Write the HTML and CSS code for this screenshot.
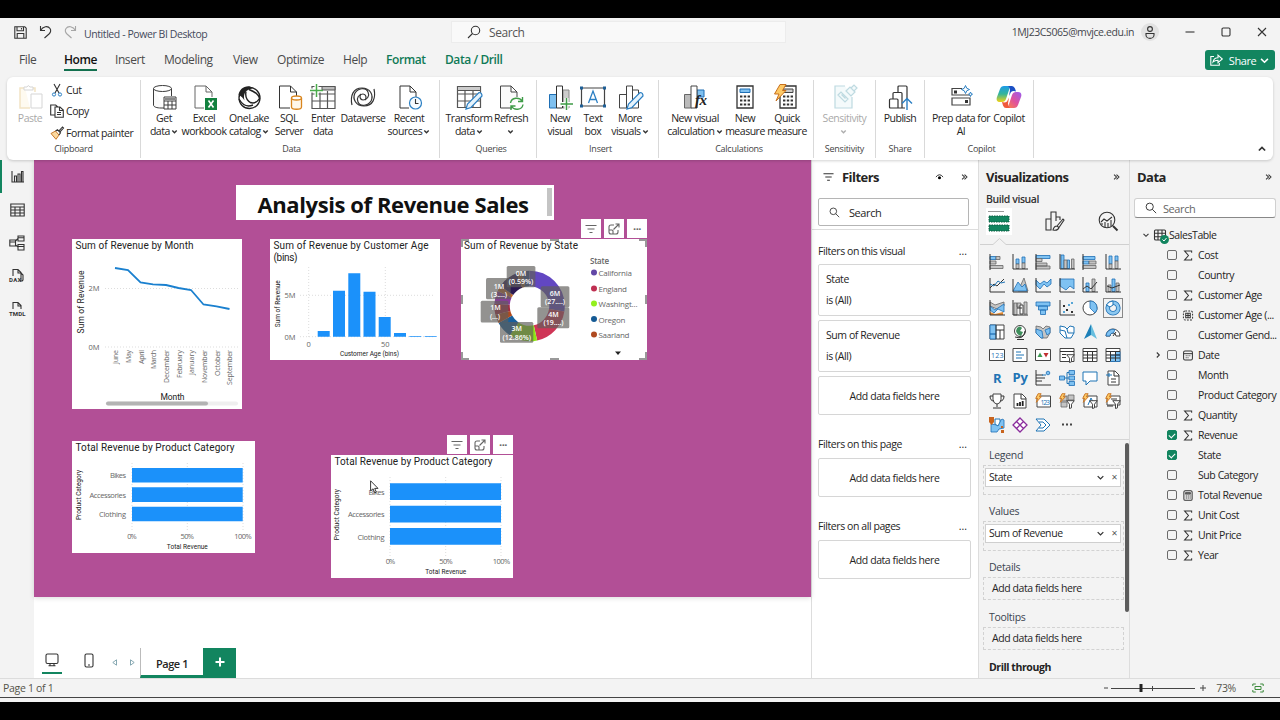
FILE: index.html
```html
<!DOCTYPE html>
<html lang="en">

<head>
    <meta charset="UTF-8">
    <meta name="viewport" content="width=device-width, initial-scale=1.0">
    <title>Untitled - Power BI Desktop</title>
    <link rel="stylesheet" href="styles.css">
</head>

<body>
    <svg class="defs">
        <symbol id="chev" viewBox="0 0 8 8"><path class="ln" d="M1.5 2.8 4 5.3 6.5 2.8" /></symbol>
        <symbol id="dbl" viewBox="0 0 10 10"><path class="ln" d="M1.5 1.5 5 5 1.5 8.5M5 1.5 8.5 5 5 8.5" /></symbol>
        <symbol id="lens" viewBox="0 0 14 14"><circle class="ln" cx="8.5" cy="5.5" r="4.2" /><path class="ln" d="M5.5 8.5 1 13" /></symbol>
        <symbol id="lensl" viewBox="0 0 14 14"><circle class="ln" cx="5.5" cy="5.5" r="4.2" /><path class="ln" d="M8.5 8.5 13 13" /></symbol>
        <symbol id="sum" viewBox="0 0 10 12"><path class="ln" d="M9 3V1H1.2L5.5 6 1.2 11H9V9" /></symbol>
        <symbol id="filt" viewBox="0 0 12 10"><path class="ln" d="M0.5 1.5h11M2.5 5h7M4.5 8.5h3" /></symbol>
        <symbol id="focus" viewBox="0 0 12 12"><path class="ln" d="M6 2H3Q1 2 1 4v5q0 2 2 2h5q2 0 2-2V7M1 7h3q1 0 1 1v3M5.5 6.5 11 1M7.500 1H11v3.500" /></symbol>
        <symbol id="bolt" viewBox="0 0 8 11"><path fill="#fdc966" stroke="#c9701c" d="M3.500 .6H7L5 4h2.300L1.500 10.400 3 6H.8z" /></symbol>
        <symbol id="funnel" viewBox="0 0 9 9"><path fill="#fff" stroke="#444" d="M.7.700h7.600L5.500 4.200v3.600l-2 .7V4.200z" /></symbol>
    </svg>

    <div class="app">
        <header class="titlebar">
            <div class="quick">
                <svg width="13" height="13" viewBox="0 0 13 13"><path class="ln" d="M.8.8h10l1.400 1.400v10H.8zM3 .8v4h6.500v-4M3.200 12V7.500h6.600V12M7.500 2v1.500" /></svg>
                <svg width="13" height="14" viewBox="0 0 13 14"><path class="ln" d="M1.500 1v4.500H6M1.500 5.500C4 1 9 .5 11 3.500c1.300 2 .5 4-1 5.500L5.500 13" /></svg>
                <svg class="off" width="13" height="14" viewBox="0 0 13 14"><path class="ln" d="M11.500 1v4.500H7M11.500 5.500C9 1 4 .5 2 3.500c-1.300 2-.5 4 1 5.500L7.500 13" /></svg>
                <span>Untitled - Power BI Desktop</span>
            </div>
            <div class="topsearch">
                <svg width="14" height="14"><use href="#lens" /></svg>
                <span>Search</span>
            </div>
            <div class="account">
                <span>1MJ23CS065@mvjce.edu.in</span>
                <div class="avatar"><svg width="10" height="13" viewBox="0 0 10 13"><circle class="ln" cx="5" cy="3" r="2.400" /><path class="ln" d="M1 7.500h8v1.500a4 3.400 0 0 1-8 0z" /></svg></div>
                <svg width="10" height="10" viewBox="0 0 10 10"><path class="ln" d="M.5 5h9" /></svg>
                <svg width="10" height="10" viewBox="0 0 10 10"><rect class="ln" x="1" y="1" width="8" height="8" rx="1.200" /></svg>
                <svg width="10" height="10" viewBox="0 0 10 10"><path class="ln" d="M1 1l8 8M9 1 1 9" /></svg>
            </div>
        </header>

        <nav class="menubar">
            <div class="menu">
                <span>File</span><span class="on">Home</span><span>Insert</span><span>Modeling</span><span>View</span><span>Optimize</span><span>Help</span><span class="ctx">Format</span><span class="ctx">Data / Drill</span>
            </div>
            <button class="share">
                <svg width="13" height="12" viewBox="0 0 13 12"><path class="ln" d="M4 2.500H.8v8.700h8.500V9M3 8c.5-3 2.500-4.200 5-4.300V1.200L12.300 5 8 8.600V6.200C5.800 6.200 4.300 6.600 3 8z" /></svg>
                Share
                <svg width="11" height="11"><use href="#chev" /></svg>
            </button>
        </nav>

        <section class="ribbon">
            <div class="group clip">
                <div class="cmds">
                    <div class="cmd off">
                        <svg width="26" height="26" viewBox="0 0 26 26"><path fill="#fdf3da" stroke="#e0bd70" stroke-width="1.500" d="M8 4H3v20h10M18 8V4h-5" /><path fill="#fff" stroke="#999" d="M7 6V3h3q1-3 3 0h3v3zM14 10h11v14H14z" /></svg>
                        <span>Paste</span>
                    </div>
                    <div class="mini">
                        <div><svg width="14" height="14" viewBox="0 0 14 14"><path class="ln" d="M4 1l5 9M10 1 5 10" /><g fill="none" stroke="#2b7fc3"><circle cx="4" cy="11.500" r="1.600" /><circle cx="10" cy="11.500" r="1.600" /></g></svg>Cut</div>
                        <div><svg width="14" height="14" viewBox="0 0 14 14"><path class="ln" d="M5 11H.7V1h5l2 2M5 3h5l3.300 3v7.300H5zM9.500 3v3.500h3.500M7 8.500h4M7 10.500h4" /></svg>Copy</div>
                        <div><svg width="14" height="14" viewBox="0 0 14 14"><path fill="#fbd9a0" stroke="#c97a2b" d="M1 7.500 5.500 5 9 9l-3 4.300z" /><path class="ln" d="M5.500 5 7.500 3.800l3 3L9 9M9 4.800 12.500 1l1 1L10 5.800" /></svg>Format painter</div>
                    </div>
                </div>
                <div class="name">Clipboard</div>
            </div>
            <div class="group data">
                <div class="cmds">
                    <div class="cmd w40">
                        <svg width="26" height="26" viewBox="0 0 26 26"><path fill="#fafafa" stroke="#3b3b3b" d="M13 24H10c-4 0-7.500-1-7.500-3V4.500M20.500 12V4.500" /><ellipse cx="11.500" cy="4.500" rx="9" ry="3" fill="#fff" stroke="#3b3b3b" /><path fill="#fff" stroke="#3b3b3b" d="M13 13h12v12H13zM13 17h12M13 21h12M17 17v8M21 17v8" /><path stroke="#888" stroke-width="2" d="M13.500 15h11" /></svg>
                        <span>Get<br>data <svg width="7" height="7"><use href="#chev" /></svg></span>
                    </div>
                    <div class="cmd w40">
                        <svg width="26" height="26" viewBox="0 0 26 26"><path fill="#fff" stroke="#666" d="M13 24H4V2h11l6 6v5M15 2v6h6" /><path fill="#12813f" d="M14 14h12v12H14z" /><path fill="none" stroke="#fff" stroke-width="1.600" d="M17.500 16.500l5 7M22.500 16.500l-5 7" /></svg>
                        <span>Excel<br>workbook</span>
                    </div>
                    <div class="cmd w50">
                        <svg width="26" height="26" viewBox="0 0 26 26"><circle cx="13.500" cy="14" r="10.500" fill="#fff" stroke="#222" stroke-width="1.300" /><path fill="#222" d="M14 2.500C8 1.500 3 6 2.500 11c3 1 4.500 3 6 5.500C7 11 9 7 13 5.500c2-.8 4-1.500 4-1.500z" /><path fill="none" stroke="#222" stroke-width="1.400" d="M13 5.500c5 2 9.500 4 10.500 9-2.500 4-6 5-9 4M10 7.500c-1 5 1 9 5 11.500M3 15c4 7 9 8 14 6" /></svg>
                        <span>OneLake<br>catalog <svg width="7" height="7"><use href="#chev" /></svg></span>
                    </div>
                    <div class="cmd w30">
                        <svg width="26" height="26" viewBox="0 0 26 26"><path fill="#fff" stroke="#333" d="M14 24H3.500V2h11l6 6v5M14.500 2v6h6" /><path fill="#fff7ea" stroke="#d9861f" stroke-width="1.300" d="M15.500 14v9c0 3 10 3 10 0v-9" /><ellipse cx="20.500" cy="14" rx="5" ry="2" fill="#fff" stroke="#d9861f" stroke-width="1.300" /></svg>
                        <span>SQL<br>Server</span>
                    </div>
                    <div class="cmd w38">
                        <svg width="26" height="26" viewBox="0 0 26 26"><path fill="#fff" stroke="#555" stroke-width="1.200" d="M2 2.500h23v22H2zM2 10h23M2 17h23M10 7v17.500M17.500 7v17.500" /><path fill="#bbb" stroke="#555" d="M12 2.500h13v3.500H12z" /><path stroke="#fff" stroke-width="4" d="M0 6.500h11M6.500 0v13" /><path stroke="#4bac4c" stroke-width="1.500" d="M0 6.500h13M6.500 0v13" /></svg>
                        <span>Enter<br>data</span>
                    </div>
                    <div class="cmd w42">
                        <svg width="26" height="26" viewBox="0 0 26 26"><g fill="none" stroke="#333" stroke-width="1.200"><path d="M2 21C0 12 3 4 12 4c8 0 12 7 9 13-3 5-11 6-13 1-2-4 1-8 5-8 3 0 4 4 2 6" /><path d="M24 5c2 9-1 17-10 17C6 22 2 15 5 9c3-5 11-6 13-1 2 4-1 8-5 8-3 0-4-4-2-6" /></g></svg>
                        <span>Dataverse</span>
                    </div>
                    <div class="cmd w50">
                        <svg width="26" height="26" viewBox="0 0 26 26"><path fill="#fff" stroke="#333" d="M13 24H4V2h10l6 6v5M14 2v6h6" /><circle cx="19.500" cy="19" r="6" fill="#f4faff" stroke="#2b7fc3" stroke-width="1.200" /><path class="ln" d="M19.500 15v4.500h3" /></svg>
                        <span>Recent<br>sources <svg width="7" height="7"><use href="#chev" /></svg></span>
                    </div>
                </div>
                <div class="name">Data</div>
            </div>
            <div class="group queries">
                <div class="cmds">
                    <div class="cmd w46">
                        <svg width="26" height="26" viewBox="0 0 26 26"><path fill="#fff" stroke="#555" stroke-width="1.200" d="M1.500 2.500h23v21h-23zM1.500 10h23M1.500 17h23M9 7v16M17 7v16" /><path fill="#ccc" stroke="#555" d="M1.500 2.500h23v4h-23z" /><path fill="#e6f3fc" stroke="#2b7fc3" stroke-width="1.200" d="M10 25l1.500-5L23 8.500q3 0 3 3.500L15 23.500z" /></svg>
                        <span>Transform<br>data <svg width="7" height="7"><use href="#chev" /></svg></span>
                    </div>
                    <div class="cmd w38">
                        <svg width="26" height="26" viewBox="0 0 26 26"><path fill="#fafafa" stroke="#444" d="M14 24H2.500V2H13l6 6v5M13 2v6h6" /><path fill="none" stroke="#3f9c48" stroke-width="1.400" d="M12.500 19c1-6 9-6 11.500-2M24.500 13v4.500H20M25 20.500c-1 6-9 6-11.500 2M13 26v-4h4.500" /></svg>
                        <span>Refresh<br><svg width="7" height="7"><use href="#chev" /></svg></span>
                    </div>
                </div>
                <div class="name">Queries</div>
            </div>
            <div class="group insert">
                <div class="cmds">
                    <div class="cmd w34">
                        <svg width="26" height="26" viewBox="0 0 26 26"><path fill="#7fc0ef" stroke="#1e6fb5" d="M2.500 10.500h7V24h-7z" /><path fill="#ccc" stroke="#888" d="M16 6h6v18h-6z" /><path fill="#fff" stroke="#333" d="M9.500 2h6v22h-6z" /><path stroke="#fff" stroke-width="4" d="M13 20h13M19.500 14v12" /><path stroke="#3f9c48" stroke-width="1.500" d="M13.500 20H26M19.500 14v12" /></svg>
                        <span>New<br>visual</span>
                    </div>
                    <div class="cmd w32">
                        <svg width="26" height="26" viewBox="0 0 26 26"><path fill="#fff" stroke="#444" stroke-width="1.200" d="M1.500 4h23v18h-23z" /><path fill="none" stroke="#2b7fc3" stroke-width="1.300" d="M8.500 19 13 7l4.500 12M10 15.500h6" /><path fill="#1e5f96" d="M0 2.500h3v3H0zM23 2.500h3v3h-3zM0 20.500h3v3H0zM23 20.500h3v3h-3z" /></svg>
                        <span>Text<br>box</span>
                    </div>
                    <div class="cmd w42">
                        <svg width="26" height="26" viewBox="0 0 26 26"><path fill="#fff" stroke="#444" d="M2.500 10.500h7V24h-7zM15.500 6h6v18h-6zM9.500 2h6v22h-6z" /><path fill="#e6f3fc" stroke="#2b7fc3" stroke-width="1.200" d="M10 25l1.500-5L23 8.500q3 0 3 3.500L15 23.500z" /></svg>
                        <span>More<br>visuals <svg width="7" height="7"><use href="#chev" /></svg></span>
                    </div>
                </div>
                <div class="name">Insert</div>
            </div>
            <div class="group calc">
                <div class="cmds">
                    <div class="cmd w60">
                        <svg width="26" height="26" viewBox="0 0 26 26"><path fill="#bbb" stroke="#666" d="M2.500 10.500h7V24h-7z" /><path fill="#7fc0ef" stroke="#1e6fb5" d="M15 6h7v7h-7z" /><path fill="#fff" stroke="#444" d="M9 2h6v22H9z" /><text class="fx" x="13" y="21">fx</text></svg>
                        <span>New visual<br>calculation <svg width="7" height="7"><use href="#chev" /></svg></span>
                    </div>
                    <div class="cmd w40">
                        <svg width="26" height="26" viewBox="0 0 26 26"><path fill="#fff" stroke="#333" stroke-width="1.300" d="M5 2h16v22H5z" /><path fill="#7fc0ef" stroke="#1e6fb5" d="M8 5h10v3.500H8z" /><path class="keys" d="M8 12.500h10M8 16.500h10M8 20.500h10" /></svg>
                        <span>New<br>measure</span>
                    </div>
                    <div class="cmd w44">
                        <svg width="26" height="26" viewBox="0 0 26 26"><path fill="#fff" stroke="#333" stroke-width="1.300" d="M6 2h16v22H6z" /><path fill="#ccc" stroke="#444" d="M9 5h10v3.500H9z" /><path class="keys" d="M9 12.500h10M9 16.500h10M9 20.500h10" /><path fill="#fdc966" stroke="#c9701c" d="M6 .5h6L8.500 6.500H12L2 17l3-7H.5z" /></svg>
                        <span>Quick<br>measure</span>
                    </div>
                </div>
                <div class="name">Calculations</div>
            </div>
            <div class="group sens">
                <div class="cmds">
                    <div class="cmd off">
                        <svg width="26" height="26" viewBox="0 0 26 26"><g fill="#e4f3f6" stroke="#5fa5b5" stroke-width="1.200"><path d="M14 2H4v22h17V13" /><path d="M7 11l3-3 7 7-3 3zM15 7l4-4 5 5-4 4zM20 4l3-3 3 3-3 3zM10.500 10.500l4 4" /></g></svg>
                        <span>Sensitivity<br><svg width="7" height="7"><use href="#chev" /></svg></span>
                    </div>
                </div>
                <div class="name">Sensitivity</div>
            </div>
            <div class="group pub">
                <div class="cmds">
                    <div class="cmd">
                        <svg width="26" height="26" viewBox="0 0 26 26"><path fill="#fff" stroke="#333" stroke-width="1.200" d="M11 8V3q0-1 1-1h7q1 0 1 1v21H3.500q-1 0-1-1v-7q0-1 1-1H10q1 0 1 1v8M6 15V9.500q0-1 1-1h7q1 0 1 1V24" /><path fill="none" stroke="#fff" stroke-width="4" d="M20 26V15" /><path fill="none" stroke="#2b7fc3" stroke-width="1.400" d="M20 26V14.500M15 19.500l5-5 5 5" /></svg>
                        <span>Publish</span>
                    </div>
                </div>
                <div class="name">Share</div>
            </div>
            <div class="group copilot">
                <div class="cmds">
                    <div class="cmd w62">
                        <svg width="26" height="26" viewBox="0 0 26 26"><path fill="#fff" stroke="#444" stroke-width="1.200" d="M22 11H4V4.500h10M4 14h18v7H4z" /><path fill="#333" d="M6 6.500h3v3H6zM17 16h3v3h-3z" /><path fill="#fff" stroke="#2b7fc3" d="M17.500 1.500q.5 3.500 4 4-3.500.5-4 4-.5-3.500-4-4 3.500-.5 4-4zM22.500 8q.2 2 2 2.200-1.800.3-2 2.300-.2-2-2-2.300 1.800-.2 2-2.200z" /></svg>
                        <span>Prep data for<br>AI</span>
                    </div>
                    <div class="cmd w34">
                        <svg width="26" height="26" viewBox="0 0 26 26">
                            <defs>
                                <linearGradient id="ca" x1="0" y1="0" x2="0" y2="1"><stop offset="0" stop-color="#1c9be8" /><stop offset=".5" stop-color="#35b59a" /><stop offset="1" stop-color="#f3d314" /></linearGradient>
                                <linearGradient id="cb" x1="1" y1="0" x2="0" y2="1"><stop offset="0" stop-color="#9a5cf0" /><stop offset=".5" stop-color="#e0529c" /><stop offset="1" stop-color="#ff8a3c" /></linearGradient>
                            </defs>
                            <path fill="url(#ca)" d="M8 2h9q-3 0-4 4l-3 9q-1 3-4 3H4c-3 0-4-2-3-5L4 5q1-3 4-3z" />
                            <path fill="#1b50c4" d="M12 2h4q2 0 3 2.500l1 3q-3-1-5 .5l-2 4 1-6q0-3-2-4z" />
                            <path fill="url(#cb)" d="M18 24H9q3 0 4-4l3-9q1-3 4-3h2c3 0 4 2 3 5l-3 8q-1 3-4 3z" />
                            <path fill="#f05a3c" d="M14 24h-4q-2 0-3-2.500l-1-3.500q3 1 5-.5l2-4-1 6q0 3 2 4.500z" />
                        </svg>
                        <span>Copilot</span>
                    </div>
                </div>
                <div class="name">Copilot</div>
            </div>
            <svg class="fold" width="10" height="10"><use href="#chev" /></svg>
        </section>

        <main class="work">
            <aside class="rail">
                <div class="on"><svg width="13" height="13" viewBox="0 0 13 13"><path class="ln" d="M1 1v11h12M3.500 12V6h2v6M7 12V4h2v8M10.500 12V1.500h1.500V12" /></svg></div>
                <div><svg width="15" height="14" viewBox="0 0 15 14"><path class="ln" d="M.8 1h13.400v12H.8zM.8 4h13.400M.8 7h13.400M.8 10h13.400M5 4v9M10 4v9" /></svg></div>
                <div><svg width="16" height="16" viewBox="0 0 16 16"><path class="ln" d="M.8 5h5.700v6H.8zM9 1h6v5H9zM9 9.500h6v5.500H9zM.8 7h5.700M9 2.800h6M9 11.500h6M6.500 6 9 3.500M6.500 10l2.500 2" /></svg></div>
                <div><svg width="16" height="16" viewBox="0 0 16 16"><path class="ln" d="M4 8V1.500h5l3 3V12l-1 1.500M9 1.500V5h3M12 5l2 2v5l-1.500 1.500" /><text x="0" y="14" textLength="12">DAX</text></svg></div>
                <div><svg width="16" height="16" viewBox="0 0 16 16"><path class="ln" d="M4 8V1.500h5l3 3V8M9 1.500V5h3" /><text x="0" y="14.500" textLength="16">TMDL</text></svg></div>
            </aside>

            <div class="center">
                <div class="canvas">
                    <div class="headline"><span>Analysis of Revenue Sales</span></div>

                    <div class="visual month">
                        <svg width="170" height="170">
                            <text class="t" x="3.500" y="6.500" textLength="118">Sum of Revenue by Month</text>
                            <path class="grid" d="M33 49.500h135M33 108h135" />
                            <text class="ax e" x="27.500" y="49">2M</text>
                            <text class="ax e" x="27.500" y="107.500">0M</text>
                            <path class="line" d="M43 29 56 31 68.500 43.300 81 45.300 94 46 106.500 49 119 51 131.500 65.500 144.500 67.300 157.500 70" />
                            <text class="lab m" transform="translate(9 63) rotate(-90)" textLength="63">Sum of Revenue</text>
                            <g class="cats">
                                <text transform="translate(43.500 111) rotate(-90)" textLength="14">June</text>
                                <text transform="translate(56.300 111) rotate(-90)" textLength="13">May</text>
                                <text transform="translate(69 111) rotate(-90)" textLength="14">April</text>
                                <text transform="translate(81.700 111) rotate(-90)" textLength="19">March</text>
                                <text transform="translate(94.300 111) rotate(-90)" textLength="33">December</text>
                                <text transform="translate(107 111) rotate(-90)" textLength="28">February</text>
                                <text transform="translate(119.700 111) rotate(-90)" textLength="25">January</text>
                                <text transform="translate(132.300 111) rotate(-90)" textLength="33">November</text>
                                <text transform="translate(145 111) rotate(-90)" textLength="26">October</text>
                                <text transform="translate(157.500 111) rotate(-90)" textLength="35">September</text>
                            </g>
                            <text class="lab m" x="100.500" y="157.500" textLength="24">Month</text>
                            <rect x="34" y="162.500" width="132" height="4" rx="2" fill="#efefef" />
                            <rect x="34" y="162.500" width="102" height="4" rx="2" fill="#b3b3b3" />
                        </svg>
                    </div>

                    <div class="visual age">
                        <svg width="170" height="121">
                            <text class="t" x="3.500" y="6.500" textLength="155">Sum of Revenue by Customer Age</text>
                            <text class="t" x="3.500" y="18.500" textLength="24">(bins)</text>
                            <path class="grid" d="M30 56.300h135M30 97.700h135M38.700 28v70M115.300 28v70" />
                            <text class="ax e" x="25.500" y="56.300">5M</text>
                            <text class="ax e" x="25.500" y="97.500">0M</text>
                            <path class="bar" d="M47.700 92h12v5.700h-12zM63 51.700h12v46H63zM78.300 34.300h12v63.400h-12zM93.500 52.700h12v45h-12zM108.700 78h12v19.700h-12zM124 94h12v3.700h-12zM139.300 96.900h12v.8h-12zM154.700 96.900h12v.8h-12z" />
                            <text class="ax m" x="38.700" y="104.500">0</text>
                            <text class="ax m" x="115.300" y="104.500">50</text>
                            <text class="sl m" transform="translate(7.700 64.700) rotate(-90)" textLength="47">Sum of Revenue</text>
                            <text class="sl m" x="99.500" y="114.700" textLength="59">Customer Age (bins)</text>
                        </svg>
                    </div>

                    <div class="visual state">
                        <div class="tools">
                            <span><svg width="12" height="10"><use href="#filt" /></svg></span><span><svg width="12" height="12"><use href="#focus" /></svg></span><span>···</span>
                        </div>
                        <svg width="186" height="121">
                            <text class="t" x="3" y="6.500" textLength="114">Sum of Revenue by State</text>
                            <g class="ring">
                                <circle pathLength="100" cx="68.500" cy="67" r="27.500" stroke="#6247c2" stroke-dasharray="27.500 100" />
                                <circle pathLength="100" cx="68.500" cy="67" r="27.500" stroke="#cf3556" stroke-dasharray="19 100" stroke-dashoffset="-27.500" />
                                <circle pathLength="100" cx="68.500" cy="67" r="27.500" stroke="#8ee615" stroke-dasharray="12.900 100" stroke-dashoffset="-46.500" />
                                <circle pathLength="100" cx="68.500" cy="67" r="27.500" stroke="#17609c" stroke-dasharray="7.600 100" stroke-dashoffset="-59.400" />
                                <circle pathLength="100" cx="68.500" cy="67" r="27.500" stroke="#b24a1c" stroke-dasharray="4 100" stroke-dashoffset="-67" />
                                <circle pathLength="100" cx="68.500" cy="67" r="27.500" stroke="#a8263e" stroke-dasharray="5 100" stroke-dashoffset="-71" />
                                <circle pathLength="100" cx="68.500" cy="67" r="27.500" stroke="#8a3a9c" stroke-dasharray="6 100" stroke-dashoffset="-76" />
                                <circle pathLength="100" cx="68.500" cy="67" r="27.500" stroke="#c0682c" stroke-dasharray="2.500 100" stroke-dashoffset="-82" />
                                <circle pathLength="100" cx="68.500" cy="67" r="27.500" stroke="#2c1a52" stroke-dasharray="9.500 100" stroke-dashoffset="-84.500" />
                                <circle pathLength="100" cx="68.500" cy="67" r="27.500" stroke="#8b5a34" stroke-dasharray="2.500 100" stroke-dashoffset="-94" />
                                <circle pathLength="100" cx="68.500" cy="67" r="27.500" stroke="#2f4c86" stroke-dasharray="3.500 100" stroke-dashoffset="-96.500" />
                            </g>
                            <g class="tag">
                                <rect x="45.700" y="27" width="28.700" height="21.300" /><rect x="79.700" y="47.300" width="28.700" height="21" /><rect x="76.300" y="68.300" width="32" height="21" /><rect x="39" y="83" width="33.300" height="20.700" /><rect x="19.700" y="61.700" width="27.700" height="21.700" /><rect x="25" y="39" width="24.700" height="21.300" />
                                <text x="60" y="34">0M</text><text x="60" y="42.500">(0.59%)</text>
                                <text x="94" y="54">6M</text><text x="94" y="62.500">(27....)</text>
                                <text x="92.500" y="75">4M</text><text x="92.500" y="83.500">(19....)</text>
                                <text x="55.700" y="89.500">3M</text><text x="55.700" y="98">(12.86%)</text>
                                <text x="34.500" y="68.500">1M</text><text x="34" y="77">(...)</text>
                                <text x="38" y="47">1M</text><text x="38" y="55.500">(3....)</text>
                            </g>
                            <text class="leg b" x="129" y="21" textLength="19">State</text>
                            <circle cx="133" cy="33.500" r="3" fill="#6247a6" /><text class="leg" x="137.500" y="33.500" textLength="33.500">California</text>
                            <circle cx="133" cy="49.500" r="3" fill="#bf2f52" /><text class="leg" x="137.500" y="49.500" textLength="28.500">England</text>
                            <circle cx="133" cy="64.500" r="3" fill="#94f01e" /><text class="leg" x="137.500" y="64.500" textLength="39">Washingt...</text>
                            <circle cx="133" cy="80" r="3" fill="#155a94" /><text class="leg" x="137.500" y="80" textLength="27">Oregon</text>
                            <circle cx="133" cy="95.500" r="3" fill="#b04a20" /><text class="leg" x="137.500" y="95.500" textLength="31">Saarland</text>
                            <path d="M154 112.500h6l-3 3.500z" fill="#222" />
                            <path class="grip" d="M1 8V1h7M178 1h7v7M185 113v7h-7M8 120H1v-7M89 1h9M89 120h9M1 56v9M185 56v9" />
                        </svg>
                    </div>

                    <div class="visual cat1">
                        <svg width="183" height="112">
                            <text class="t" x="3.500" y="6.500" textLength="159">Total Revenue by Product Category</text>
                            <path class="grid" d="M60 22v68M115.300 22v68M171 22v68" />
                            <path class="bar" d="M60 27h110.700v14.500H60zM60 46.300h110.700V61H60zM60 65.700h110.700v14.500H60z" />
                            <text class="ax e" x="54" y="34.300" textLength="16">Bikes</text>
                            <text class="ax e" x="54" y="53.700" textLength="36.500">Accessories</text>
                            <text class="ax e" x="54" y="73" textLength="27">Clothing</text>
                            <text class="ax m" x="60" y="95" textLength="9.500">0%</text>
                            <text class="ax m" x="115.300" y="95" textLength="13.500">50%</text>
                            <text class="ax m" x="171" y="95" textLength="17.500">100%</text>
                            <text class="sl m" x="115.300" y="105.500" textLength="41">Total Revenue</text>
                            <text class="sl m" transform="translate(6.700 54) rotate(-90)" textLength="50">Product Category</text>
                        </svg>
                    </div>

                    <div class="visual cat2">
                        <div class="tools">
                            <span><svg width="12" height="10"><use href="#filt" /></svg></span><span><svg width="12" height="12"><use href="#focus" /></svg></span><span>···</span>
                        </div>
                        <svg width="182" height="123">
                            <text class="t" x="3.500" y="6.500" textLength="158">Total Revenue by Product Category</text>
                            <path class="grid" d="M59 22v79M114.700 22v79M170 22v79" />
                            <path class="bar" d="M59 28.300h111V45H59zM59 50.700h111v16.700H59zM59 73h111v16.700H59z" />
                            <text class="ax e" x="53.500" y="37" textLength="16">Bikes</text>
                            <text class="ax e" x="53.500" y="59.300" textLength="36.500">Accessories</text>
                            <text class="ax e" x="53.500" y="81.700" textLength="27">Clothing</text>
                            <text class="ax m" x="59.500" y="106.300" textLength="9.500">0%</text>
                            <text class="ax m" x="115" y="106.300" textLength="13.500">50%</text>
                            <text class="ax m" x="170.500" y="106.300" textLength="17.500">100%</text>
                            <text class="sl m" x="114.700" y="117" textLength="41">Total Revenue</text>
                            <text class="sl m" transform="translate(6.300 59.700) rotate(-90)" textLength="51">Product Category</text>
                        </svg>
                    </div>

                    <svg class="pointer" width="9" height="14" viewBox="0 0 9 14"><path fill="#fff" stroke="#222" stroke-width=".9" d="M.6.800v10l2.500-2 1.600 4 1.600-.7-1.600-3.700H8z" /></svg>
                </div>

                <div class="pages">
                    <div class="dev on"><svg width="14" height="14" viewBox="0 0 14 14"><rect class="ln" x="1" y="1" width="12" height="9.500" rx="1.500" /><path class="ln" d="M5 10.500v2M9 10.500v2M3.500 12.700h7" /></svg></div>
                    <div class="dev"><svg width="10" height="15" viewBox="0 0 10 15"><rect class="ln" x="1" y="1" width="8" height="13" rx="1.500" /><path class="ln" d="M4 12h2" /></svg></div>
                    <div class="step"><svg width="5" height="7" viewBox="0 0 5 7"><path d="M4.500.8v5.400L.8 3.500z" /></svg><svg width="5" height="7" viewBox="0 0 5 7"><path d="M.5.8v5.400l3.700-2.700z" /></svg></div>
                    <div class="page">Page 1</div>
                    <div class="add"><svg width="10" height="10" viewBox="0 0 10 10"><path stroke="#fff" stroke-width="2" d="M5 .5v9M.5 5h9" /></svg></div>
                </div>
            </div>

            <aside class="filters">
                <div class="head">
                    <svg width="11" height="10"><use href="#filt" /></svg><b>Filters</b>
                    <svg class="eye" width="9" height="8" viewBox="0 0 10 8"><path class="ln" d="M1 4Q5-1 9 4" /><circle cx="5" cy="4.800" r="1.700" /></svg>
                    <svg width="7" height="8"><use href="#dbl" /></svg>
                </div>
                <div class="box"><svg width="11" height="11"><use href="#lensl" /></svg>Search</div>
                <div class="sec"><span>Filters on this visual</span><i>...</i></div>
                <div class="card"><span>State</span><span>is (All)</span></div>
                <div class="card"><span>Sum of Revenue</span><span>is (All)</span></div>
                <div class="drop">Add data fields here</div>
                <div class="sec"><span>Filters on this page</span><i>...</i></div>
                <div class="drop">Add data fields here</div>
                <div class="sec"><span>Filters on all pages</span><i>...</i></div>
                <div class="drop">Add data fields here</div>
            </aside>

            <aside class="viz">
                <div class="head"><b>Visualizations</b><svg width="7" height="8"><use href="#dbl" /></svg></div>
                <div class="sub">Build visual</div>
                <div class="modes">
                    <div class="on"><svg width="22" height="22" viewBox="0 0 22 22"><path stroke="#999" d="M0 1.500h16" /><path fill="#12855f" stroke="#0b5c41" stroke-dasharray="1.500 1" d="M1 6h20v6H1zM1 15h20v6H1z" /></svg></div>
                    <svg width="20" height="20" viewBox="0 0 20 20"><path class="ln" d="M1 19V8h5v11zM6 8V1h5v9M11 6h4v3M8 19q1-4 4-4l2 1.500Q13 20 8 19zM12 15l6-7 1 1-5 7.500" /></svg>
                    <svg width="20" height="20" viewBox="0 0 20 20"><circle class="ln" cx="9" cy="9" r="7.800" /><path class="ln" d="M3 11l3-3 3 2 5-4M4 12v2M7 11v5M10 12v4.500M13 9v6" /><path class="ln thick" d="M15 15l4.500 4.500" /></svg>
                </div>
                <svg class="notch" width="149" height="8" viewBox="0 0 149 8"><path fill="none" stroke="#d0d0d0" d="M0 6.500h13L19.500 .5 26 6.500h123" /></svg>
                <div class="gallery">
                    <svg viewBox="0 0 16 16"><path class="b" d="M1 2.500h6v3H1z" /><path class="g" d="M7 2.500h4v3H7zM1 7h6v3H1zM1 11.500h13v3H1z" /><path class="k" d="M1 0v16" /></svg>
                    <svg viewBox="0 0 16 16"><path class="b" d="M4 5h3v5H4zM10 3h3v6h-3z" /><path class="g" d="M4 10h3v4.500H4zM10 9h3v5.500h-3z" /><path class="k" d="M1 0v15h15" /></svg>
                    <svg viewBox="0 0 16 16"><path class="b" d="M1 1.500h14v3H1z" /><path class="g" d="M1 4.500h6v3H1zM1 9h11v3H1zM1 12h14v3H1z" /><path class="k" d="M1 0v16" /></svg>
                    <svg viewBox="0 0 16 16"><path class="b" d="M2 1h3v13.500H2zM8 6h2.500v8.500H8z" /><path class="g" d="M5 6h3v8.500H5zM12.500 5h2.500v9.500h-2.500z" /><path class="k" d="M1 0v15h15" /></svg>
                    <svg viewBox="0 0 16 16"><path class="b" d="M1 2.500h12v3H1zM1 7h6v3H1z" /><path class="g" d="M7 7h7v3H7zM1 11.500h13v3H1z" /><path class="k" d="M1 0v16" /></svg>
                    <svg viewBox="0 0 16 16"><path class="b" d="M4 2h3v8H4zM10 2h3v5h-3z" /><path class="g" d="M4 10h3v4.500H4zM10 7h3v7.500h-3z" /><path class="k" d="M1 0v15h15" /></svg>

                    <svg viewBox="0 0 16 16"><path class="k" d="M1 1v14h15M1 11l4-4 3 2 7-7" /><path class="bl" d="M1 7l4 2 4-5 3 2 4-1" /></svg>
                    <svg viewBox="0 0 16 16"><path class="g" d="M6 14 12 1l4 13z" /><path class="b" d="M1 14l5-9 4 5 3-3 2 7z" /><path class="k" d="M1 2v13h15" /></svg>
                    <svg viewBox="0 0 16 16"><path class="b" d="M1 3l4 4 4-3 3 2 4-4v5l-4 3-3-3-4 5-4-4z" /><path class="k" d="M1 1v14h15" /></svg>
                    <svg viewBox="0 0 16 16"><path class="b" d="M1 2h14v10l-4-3-4 4-6-4z" /><path class="k" d="M1 1v14h15" /></svg>
                    <svg viewBox="0 0 16 16"><path class="b" d="M4 6h3v8.500H4z" /><path class="g" d="M10 2h3v12.500h-3z" /><path class="k" d="M1 0v15h15M1 12l4-3 4 3 6-7" /></svg>
                    <svg viewBox="0 0 16 16"><path class="g" d="M3 8h3v6.500H3zM11 6h3v8.500h-3z" /><path class="b" d="M7 2h3v12.500H7z" /><path class="k" d="M1 0v15h15M2 9l5 2 8-3" /></svg>

                    <svg viewBox="0 0 16 16"><path class="g" d="M1 2l5 3 9-3v4L8 9 1 6z" /><path class="b" d="M1 6l5 4 9-6v8l-6-3-4 4-4-3z" /><path class="o" d="M1 12l5 2 8-2v3H1z" /><path class="k" d="M1 0v15h15" /></svg>
                    <svg viewBox="0 0 16 16"><path class="g" d="M2 3h3v12H2zM5 3h4v4H5zM12 2h3v12h-3z" /><path class="w" d="M8 5h3v9H8z" /><path class="k" d="M1 0v15h15M5 8h5" /></svg>
                    <svg viewBox="0 0 16 16"><path class="b" d="M1 2h14v4H1zM3.500 6h9v4h-9zM5.500 10h5v4.500h-5z" /></svg>
                    <svg viewBox="0 0 16 16"><path class="k" d="M1 0v15h15" /><path fill="#333" d="M4 5h2v2H4zM7 9h2v2H7zM12 11h2v2h-2z" /><path fill="#58a6d6" d="M9 4h2v2H9zM12 2h2v2h-2zM4 11h2v2H4z" /></svg>
                    <svg viewBox="0 0 16 16"><circle class="w" cx="8" cy="8" r="7" /><path class="b" d="M8 8V1a7 7 0 0 1 5 12z" /></svg>
                    <svg class="picked" viewBox="0 0 16 16"><circle cx="8" cy="8" r="5.300" fill="none" stroke="#1e6fb5" stroke-width="4.600" /><circle cx="8" cy="8" r="5.300" fill="none" stroke="#8cc8f0" stroke-width="3" /><path class="w blu" d="M8 1v4L5 7 1.500 5Q3.500 1 8 1z" /></svg>

                    <svg viewBox="0 0 16 16"><path class="w" d="M1 1h14v14H1z" /><path class="b" d="M1 1h6v9H1zM1 10h6v5H1z" /><path class="k" d="M7 6h8M7 1v14M11 6v9" /></svg>
                    <svg viewBox="0 0 16 16"><circle class="w" cx="8" cy="7" r="5.500" /><path d="M5 4q3-3 5 0l-2 3 3 1-2 4q-4-1-5-5z" fill="#3f8f5c" /><path class="k" d="M3 13q9 3 10-6M5 15.500h7" /></svg>
                    <svg viewBox="0 0 16 16"><path class="g" d="M1 2l5 1 2 2 3-3 4 1v6l-3 5H6L1 9z" /><path class="b" d="M1 5l6 2 1 7H6L1 9zM10 6l5-2v5l-3 2z" /></svg>
                    <svg viewBox="0 0 16 16"><path class="w blu" d="M1 2l5 1 2 2 3-3 4 1v6l-3 5H6L1 9zM1 6l5 1 2 7M8 5l1 4 6 0" /></svg>
                    <svg viewBox="0 0 16 16"><path fill="#1d80b8" d="M9 0v11L2 15z" /><path fill="#67bede" d="M9 0l6 15-6-4z" /></svg>
                    <svg viewBox="0 0 16 16"><path class="w" d="M1 12a7 7 0 0 1 14 0h-4a3 3 0 0 0-6 0z" /><path class="b" d="M1 12a7 7 0 0 1 9-6.500L8.500 9A3 3 0 0 0 5 12z" /><path class="k" d="M8 12l3-4" /></svg>

                    <svg viewBox="0 0 16 16"><path class="w" d="M.5 2.500h15v11H.5z" /><text x="8" y="11" textLength="12">123</text></svg>
                    <svg viewBox="0 0 16 16"><path class="w" d="M1 1.500h14v13H1z" /><path class="bl" d="M4 5h5M4 8h8M4 11h6" /></svg>
                    <svg viewBox="0 0 16 16"><path class="w" d="M.5 2.500h15v11H.5z" /><path fill="#3c9a52" d="M2.500 10 5 5.500 7.500 10z" /><path fill="#c03030" d="M8.500 6h5L11 10.500z" /></svg>
                    <svg viewBox="0 0 16 16"><path class="w" d="M1 1.500h14v13H1z" /><path class="k" d="M1 4.500h14M3 7.500h4M3 10.500h4" /><use href="#funnel" x="7" y="7" width="9" height="9" /></svg>
                    <svg viewBox="0 0 16 16"><path class="w" d="M1 1.500h14v13H1z" /><path class="k" d="M1 4.500h14M1 8h14M1 11h14M5.500 4v10M10.500 4v10" /></svg>
                    <svg viewBox="0 0 16 16"><path class="w" d="M1 1.500h14v13H1z" /><path class="b" d="M5.500 8H15v6.500H5.500zM10.500 4.500H15V8h-4.500z" /><path class="k" d="M1 4.500h14M1 8h14M1 11h14M5.500 4v10M10.500 4v10" /></svg>

                    <svg viewBox="0 0 16 16"><text class="big" x="8" y="13">R</text></svg>
                    <svg viewBox="0 0 16 16"><text class="big" x="8" y="12" textLength="15">Py</text></svg>
                    <svg viewBox="0 0 16 16"><path class="k" d="M1 0v15h15M1 5h7M1 8h9M1 11h6" /><circle class="b" cx="13" cy="3" r="1.800" /><path class="bl" d="M7 5h4" /></svg>
                    <svg viewBox="0 0 16 16"><path class="b" d="M.5 6h5v4h-5zM10 .5h5.500v4H10zM10 6h5.500v4H10zM10 11.500h5.500v4H10z" /><path class="bl" d="M5.500 8H10M8 2.500V13.500M8 2.500h2M8 13.500h2" /></svg>
                    <svg viewBox="0 0 16 16"><path class="w blu" d="M1 2h14v9H8l-4 4v-4H1z" /></svg>
                    <svg viewBox="0 0 16 16"><path class="w" d="M3 1h7l4 4v10H3z" /><path class="k" d="M9 1v5h5M6 9h5M6 12h5" /><path class="bl" d="M1 5h6M4 3v4" /></svg>

                    <svg viewBox="0 0 16 16"><path class="w" d="M4 1h8v6q-1 4-4 4T4 7z" /><path class="k" d="M4 3H1q0 5 4 5M12 3h3q0 5-4 5M8 11v3M4 15h8" /></svg>
                    <svg viewBox="0 0 16 16"><path class="w" d="M2 1h8l4 4v10H2z" /><path class="k" d="M9 1v5h5" /><path stroke="#222" stroke-width="1.800" d="M5.500 13v-3M8 13V9M10.700 13V8" /></svg>
                    <svg viewBox="0 0 16 16"><path class="w" d="M2 3h13.500v11H2z" /><text x="10" y="12" textLength="9">123</text><use href="#bolt" width="7" height="10" /></svg>
                    <svg viewBox="0 0 16 16"><path class="g" d="M2 3h6v5H2zM9 2h6v5H9zM2 9h6v5H2z" /><use href="#bolt" width="7" height="10" /><use href="#funnel" x="7" y="7" width="9" height="9" /></svg>
                    <svg viewBox="0 0 16 16"><path class="w" d="M2 3h13v11H2z" /><path class="bl" d="M6 12l3-7 2 4" /><use href="#bolt" width="7" height="10" /><use href="#funnel" x="7" y="7" width="9" height="9" /></svg>
                    <svg viewBox="0 0 16 16"><path class="w" d="M2 3h13v9H2z" /><path class="k" d="M6 6h6M2 13h6" /><use href="#bolt" width="7" height="10" /><use href="#funnel" x="7" y="7" width="9" height="9" /></svg>

                    <svg viewBox="0 0 16 16"><path class="b" d="M2 7l6 1 5-6 2 1v8l-5 1-2 3H2z" /><path class="w blu" d="M6 2h5v3L9 9l-3-2z" /><path fill="#c8641e" d="M0 0h5v5L2.500 8 0 5zM12 13h3v3h-3zM12 9h2v2h-2z" /></svg>
                    <svg viewBox="0 0 16 16"><path fill="#fff" stroke="#8a2c9c" stroke-width="1.300" d="M8 1l7 7-7 7-7-7zM4.500 4.500l7 7M11.500 4.500l-7 7" /></svg>
                    <svg viewBox="0 0 16 16"><path class="w blu" d="M1 2h8l6 6-6 6H1l5-6zM4 5h4l3 3-3 3H4" /></svg>
                    <svg viewBox="0 0 16 16"><path d="M3 6.500h2v2H3zM7 6.500h2v2H7zM11 6.500h2v2h-2z" fill="#444" /></svg>
                </div>
                <div class="wells">
                    <div class="cap">Legend</div>
                    <div class="well full"><div class="pill">State<svg width="9" height="9"><use href="#chev" /></svg><em>×</em></div></div>
                    <div class="cap">Values</div>
                    <div class="well full"><div class="pill">Sum of Revenue<svg width="9" height="9"><use href="#chev" /></svg><em>×</em></div></div>
                    <div class="cap">Details</div>
                    <div class="well">Add data fields here</div>
                    <div class="cap">Tooltips</div>
                    <div class="well">Add data fields here</div>
                    <div class="cap last">Drill through</div>
                    <div class="thumb"></div>
                </div>
            </aside>

            <aside class="fields">
                <div class="head"><b>Data</b><svg width="7" height="8"><use href="#dbl" /></svg></div>
                <div class="box"><svg width="12" height="12"><use href="#lensl" /></svg>Search</div>
                <div class="table">
                    <svg width="8" height="8"><use href="#chev" /></svg>
                    <svg width="16" height="16" viewBox="0 0 16 16"><path class="ln" d="M2.500 2h9q1 0 1 1v9H3q-1.500 0-1.500-1V3q0-1 1-1zM5 2v10M9 2v10M1.500 5.300h11M1.500 8.700h11" /><circle cx="11.500" cy="11.500" r="4.500" fill="#12855f" /><path fill="none" stroke="#fff" d="M9.500 11.500 11 13l2.500-3" /></svg>
                    SalesTable
                </div>
                <ul>
                    <li><i></i><svg><use href="#sum" /></svg>Cost</li>
                    <li><i></i><svg></svg>Country</li>
                    <li><i></i><svg><use href="#sum" /></svg>Customer Age</li>
                    <li><i></i><svg viewBox="0 0 12 12"><rect class="ln" x="1" y="1" width="10" height="10" rx="2" stroke-dasharray="2 1.300" /><path class="ln" d="M3.500 3.500h5v5h-5zM6 3.500v5M3.500 6h5" /></svg>Customer Age (...</li>
                    <li><i></i><svg></svg>Customer Gend...</li>
                    <li class="more"><svg class="open" width="8" height="8"><use href="#chev" /></svg><i></i><svg viewBox="0 0 12 12"><rect class="ln" x="1.200" y="1.200" width="9.600" height="9.600" rx="1.500" /><path class="ln" d="M1.200 4h9.600" /><path class="ln" stroke-dasharray="1 1" d="M3.500 6.300h5.500M3.500 8.500h3.500" /></svg>Date</li>
                    <li><i></i><svg></svg>Month</li>
                    <li><i></i><svg></svg>Product Category</li>
                    <li><i></i><svg><use href="#sum" /></svg>Quantity</li>
                    <li><i class="sel"></i><svg><use href="#sum" /></svg>Revenue</li>
                    <li><i class="sel"></i><svg></svg>State</li>
                    <li><i></i><svg></svg>Sub Category</li>
                    <li><i></i><svg viewBox="0 0 12 12"><rect class="ln" x="1.500" y=".8" width="9" height="10.400" rx="1.500" /><path class="ln" d="M3.500 3h5v1.300h-5z" /><path class="ln" stroke-dasharray="1.300 .8" d="M3.500 6.500h5.500M3.500 8.800h5.500" /></svg>Total Revenue</li>
                    <li><i></i><svg><use href="#sum" /></svg>Unit Cost</li>
                    <li><i></i><svg><use href="#sum" /></svg>Unit Price</li>
                    <li><i></i><svg><use href="#sum" /></svg>Year</li>
                </ul>
            </aside>
        </main>

        <footer class="status">
            <span>Page 1 of 1</span>
            <div class="zoom">
                <svg width="102" height="12" viewBox="0 0 102 12"><path stroke="#444" d="M0 6h4M7 6.500h84M48.500 4v5M96 6h6M99 3v6" /><path fill="#222" d="M35.500 2h3v8h-3z" /></svg>
                <span>73%</span>
                <svg width="12" height="10" viewBox="0 0 12 10"><path fill="none" stroke="#3c8a3c" d="M.8 3V1h3M8.200 1h3v2M11.200 7v2h-3M3.800 9h-3V7M3 3.500h6v3H3z" /></svg>
            </div>
        </footer>
    </div>
</body>

</html>
```

FILE: styles.css
```css
* {
    box-sizing: border-box;
}

body {
    margin: 0;
    height: 720px;
    padding-top: 18px;
    overflow: hidden;
    background: #000;
    color: #252423;
    font-family: "Open Sans", "Noto Sans", sans-serif;
    font-size: 10.5px;
    letter-spacing: -0.42px;
}

svg {
    flex: none;
    overflow: visible;
}

.defs {
    position: absolute;
    width: 0;
    height: 0;
}

.ln {
    fill: none;
    stroke: var(--c, #333);
    stroke-width: var(--w, 1.1);
}

.thick {
    stroke-width: 2;
}

.app {
    height: 684px;
    display: flex;
    flex-direction: column;
    background: #f3f3f3;
}

/* title bar */
.titlebar {
    height: 28px;
    display: grid;
    grid-template-columns: 451px 335px 1fr;
    align-items: center;
}

.quick {
    display: flex;
    align-items: center;
    gap: 12px;
    padding-left: 14px;
    color: #444a5c;
}

.quick span {
    margin: 3px 0 0 -5px;
}

.off {
    opacity: 0.4;
}

.topsearch {
    height: 22px;
    display: flex;
    align-items: center;
    gap: 8px;
    padding-left: 15px;
    background: #f9f9f9;
    border: 1px solid #ececec;
    font-size: 12px;
    color: #555;
}

.account {
    display: flex;
    align-items: center;
    justify-content: flex-end;
    padding-right: 13px;
    color: #44464c;
}

.account>svg {
    margin-left: 26px;
}

.avatar {
    width: 18px;
    height: 18px;
    margin-left: 7px;
    display: flex;
    align-items: center;
    justify-content: center;
    border-radius: 50%;
    background: #e2e2e2;
}

/* menu */
.menubar {
    height: 31px;
    display: flex;
    justify-content: space-between;
    padding: 4px 5px 0 19px;
}

.menu {
    display: grid;
    grid-template-columns: 45px 51px 49px 69px 44px 66px 43px 59px auto;
    justify-items: start;
    font-size: 12px;
    line-height: 20px;
    color: #4a4a4a;
}

.menu span {
    height: 21px;
}

.menu .on {
    color: #111;
    font-weight: 600;
    border-bottom: 2px solid #12704f;
}

.menu .ctx {
    color: #0f7a56;
    font-weight: 600;
}

.share {
    width: 70px;
    height: 20px;
    display: flex;
    align-items: center;
    justify-content: center;
    gap: 6px;
    padding: 0;
    border: 0;
    border-radius: 3px;
    background: #12855f;
    color: #fff;
    font: inherit;
    font-size: 11px;
    letter-spacing: inherit;
}

.share svg {
    --c: #fff;
}

.share svg:last-child {
    margin-left: -3px;
}

/* ribbon */
.ribbon {
    position: relative;
    z-index: 2;
    height: 83px;
    margin: 0 7px;
    display: flex;
    flex: none;
    background: #fff;
    border-radius: 6px;
    box-shadow: 0 1px 3px rgba(0, 0, 0, 0.18);
}

.group {
    height: 78px;
    margin-top: 3px;
    padding-top: 4px;
    display: flex;
    flex-direction: column;
    flex: none;
    border-right: 1px solid #d9d9d9;
}

.cmds {
    flex: 1;
    min-height: 0;
    display: flex;
}

.cmd {
    display: flex;
    flex-direction: column;
    align-items: center;
    text-align: center;
    line-height: 13px;
    letter-spacing: -0.48px;
    white-space: nowrap;
}

.cmd>svg {
    margin-bottom: 2px;
}

.cmd span svg {
    --w: 1.6;
    margin-left: -1px;
}

.name {
    text-align: center;
    font-size: 9px;
    line-height: 13px;
    color: #444;
    padding-bottom: 3px;
    letter-spacing: -0.25px;
}

.w30 { width: 30px; }
.w32 { width: 32px; }
.w34 { width: 34px; }
.w38 { width: 38px; }
.w40 { width: 40px; }
.w42 { width: 42px; }
.w44 { width: 44px; }
.w46 { width: 46px; }
.w50 { width: 50px; }
.w60 { width: 60px; }
.w62 { width: 62px; }

.clip { width: 134px; padding-left: 10px; }
.data { width: 299px; padding-left: 3px; }
.queries { width: 97px; padding-left: 6px; }
.insert { width: 122px; padding-left: 6px; }
.calc { width: 155px; padding-left: 6px; }
.sens { width: 62px; }
.pub { width: 49px; }
.copilot { width: 109px; padding-left: 5px; }

.clip .name {
    padding-right: 10px;
}

.sens .cmds,
.pub .cmds {
    justify-content: center;
}

.mini {
    margin: -5px 0 0 7px;
}

.mini div {
    height: 21.5px;
    display: flex;
    align-items: center;
    gap: 2px;
    white-space: nowrap;
}

.keys {
    stroke: #333;
    stroke-width: 2.2;
    stroke-dasharray: 2.4 1.4;
}

.fx {
    font: italic 600 15px "Liberation Serif", serif;
    fill: #222;
}

.fold {
    --w: 1.4;
    margin: 67px 6px 0 auto;
    transform: rotate(180deg);
}

/* work area */
.work {
    height: 518px;
    flex: none;
    display: flex;
}

.rail,
.center,
.filters,
.viz {
    flex: none;
}

.rail {
    width: 34px;
    display: flex;
    flex-direction: column;
}

.rail div {
    height: 33.2px;
    display: flex;
    align-items: center;
    justify-content: center;
    border-left: 2px solid transparent;
    padding-right: 2px;
}

.rail .on {
    border-color: #12855f;
}

.rail text {
    font: 700 6px Roboto, sans-serif;
    fill: #333;
}

.center {
    width: 778px;
    display: flex;
    flex-direction: column;
    justify-content: space-between;
    background: #fff;
}

.canvas {
    position: relative;
    width: 777px;
    height: 437px;
    background: #b24f96;
    box-shadow: 0 1px 5px rgba(0, 0, 0, 0.15);
}

.headline {
    position: absolute;
    left: 202px;
    top: 25px;
    width: 318px;
    height: 35px;
    display: flex;
    align-items: center;
    justify-content: center;
    padding: 2px 4px 0 0;
    background: #fff;
    font-size: 22px;
    font-weight: 700;
    letter-spacing: -0.4px;
    white-space: nowrap;
    color: #111;
}

.headline::after {
    content: "";
    position: absolute;
    right: 2px;
    top: 3px;
    width: 5px;
    height: 28px;
    background: #c4c4c4;
}

.visual {
    position: absolute;
    background: #fff;
}

.visual>svg {
    display: block;
    letter-spacing: 0;
}

.month { left: 38px; top: 79px; }
.age { left: 236px; top: 79px; }
.state { left: 427px; top: 79px; }
.cat1 { left: 38px; top: 281px; }
.cat2 { left: 297px; top: 295px; }

.visual text {
    dominant-baseline: central;
    font-family: Roboto, sans-serif;
}

.visual .t {
    font-size: 10px;
    fill: #222;
}

.visual .ax,
.visual .leg {
    font-family: "Open Sans", sans-serif;
    font-size: 7.5px;
    fill: #666;
}

.visual .leg {
    font-size: 8px;
}

.visual .b {
    font-weight: 600;
}

.visual .lab {
    font-size: 8.5px;
    fill: #222;
}

.visual .sl {
    font-size: 6.5px;
    fill: #222;
}

.visual .cats text {
    font-family: "Open Sans", sans-serif;
    font-size: 7px;
    fill: #666;
    text-anchor: end;
}

.visual .m {
    text-anchor: middle;
}

.visual .e {
    text-anchor: end;
}

.grid {
    fill: none;
    stroke: #ddd;
    stroke-dasharray: 1 2;
}

.line {
    fill: none;
    stroke: #1a80cf;
    stroke-width: 1.8;
}

.bar {
    fill: #1b91fa;
}

.ring {
    fill: none;
    stroke-width: 15.5;
    transform: rotate(-90deg);
    transform-origin: 68.5px 67px;
}

.tag rect {
    fill: rgba(96, 94, 92, 0.68);
    rx: 1.5px;
}

.visual .tag text {
    font: 600 7px "Open Sans", sans-serif;
    fill: #fff;
    text-anchor: middle;
}

.grip {
    fill: none;
    stroke: #999;
    stroke-width: 2;
}

.tools {
    position: absolute;
    right: 0;
    bottom: 100%;
    margin-bottom: 1px;
    display: flex;
    gap: 3px;
}

.tools span {
    width: 20px;
    height: 19px;
    display: flex;
    align-items: center;
    justify-content: center;
    background: #fff;
    font-size: 11px;
    font-weight: 700;
    color: #666;
}

.tools svg {
    opacity: 0.75;
}

.pointer {
    position: absolute;
    left: 336px;
    top: 320px;
}

.pages {
    height: 30px;
    display: flex;
    padding-left: 8px;
}

.dev {
    width: 20px;
    height: 26px;
    margin-right: 12px;
    display: flex;
    align-items: center;
    justify-content: center;
    border-bottom: 2px solid transparent;
}

.dev.on {
    margin-right: 17px;
    border-color: #12855f;
}

.step {
    width: 25px;
    height: 29px;
    margin-right: 4px;
    display: flex;
    align-items: center;
    justify-content: center;
    gap: 13px;
}

.step path {
    fill: none;
    stroke: #6a93a0;
    stroke-width: 0.8;
}

.page {
    width: 63px;
    border-left: 1px solid #bbb;
    border-bottom: 3px solid #12855f;
    text-align: center;
    line-height: 31px;
    font-size: 11px;
    font-weight: 600;
}

.add {
    width: 33px;
    display: flex;
    align-items: center;
    justify-content: center;
    padding-bottom: 2px;
    background: #12855f;
}

/* side panes */
.head {
    height: 34px;
    display: flex;
    align-items: center;
    font-size: 13px;
    letter-spacing: -0.55px;
}

.head svg:last-child {
    --w: 1.5;
    margin-left: auto;
}

.head b {
    font-weight: 700;
}

.filters {
    width: 168px;
    margin-left: -1px;
    padding: 0 7px 0 6px;
    background: #fff;
    border-left: 1px solid #ddd;
    border-right: 1px solid #ddd;
}

.filters .head {
    padding: 0 3px 0 5px;
}

.filters .head b {
    margin: 0 auto 0 8px;
}

.filters .eye {
    margin-right: 17px;
}

.filters .head svg:last-child {
    margin-left: 0;
}

.filters .box {
    width: 151px;
    height: 28px;
    margin-top: 4px;
    display: flex;
    align-items: center;
    gap: 9px;
    padding-left: 10px;
    border: 1px solid #b5b5b5;
    border-radius: 2px;
    font-size: 11px;
}

.sec {
    display: flex;
    justify-content: space-between;
    padding-right: 4px;
    line-height: 16px;
    margin: 21px 0 6px;
}

.sec i {
    font-style: normal;
    letter-spacing: 0;
}

.box+.sec {
    margin: 3px -7px 5px -6px;
    padding: 13px 11px 0 6px;
    border-top: 1px solid #ddd;
}

.card {
    height: 52px;
    margin-bottom: 4px;
    padding: 4px 7px;
    display: flex;
    flex-direction: column;
    line-height: 21px;
    border: 1px solid #d6d6d6;
    border-radius: 2px;
}

.drop {
    height: 39px;
    display: flex;
    align-items: center;
    justify-content: center;
    border: 1px solid #d6d6d6;
    border-radius: 2px;
}

.viz {
    width: 151px;
    display: flex;
    flex-direction: column;
    border-right: 1px solid #ddd;
}

.viz .head {
    padding: 0 9px 0 7px;
}

.sub {
    padding-left: 7px;
    line-height: 10px;
    font-weight: 600;
    color: #333;
}

.modes {
    height: 34px;
    display: flex;
    align-items: center;
    justify-content: space-between;
    padding: 0 11px 0 7px;
}

.modes .on {
    width: 26px;
    height: 27px;
    display: flex;
    align-items: center;
    justify-content: center;
    background: #fff;
}

.notch {
    margin-left: 1px;
}

.gallery {
    display: grid;
    grid-template-columns: repeat(6, 23.3px);
    grid-auto-rows: 23.3px;
    place-items: center;
    padding: 4px 0 0 6px;
    height: 194px;
    border-bottom: 1px solid #d6d6d6;
}

.gallery svg {
    width: 16px;
    height: 16px;
}

.gallery .picked {
    outline: 1px solid #888;
    outline-offset: 1px;
}

.gallery .k {
    fill: none;
    stroke: #333;
}

.gallery .b {
    fill: #7fc2f2;
    stroke: #1e6fb5;
    stroke-width: 0.8;
}

.gallery .g {
    fill: #c4c4c4;
    stroke: #666;
    stroke-width: 0.8;
}

.gallery .w {
    fill: #fff;
    stroke: #444;
}

.gallery .w.blu,
.gallery .bl {
    stroke: #1f74b5;
}

.gallery .bl {
    fill: none;
}

.gallery .o {
    fill: #e38b34;
}

.gallery text {
    font: 7px "Open Sans", sans-serif;
    fill: #1f74b5;
    text-anchor: middle;
}

.gallery .big {
    font-size: 13px;
    font-weight: 700;
}

.wells {
    position: relative;
    flex: 1;
    padding: 5px 5px 0 4px;
}

.cap {
    padding-left: 6px;
    line-height: 20px;
    letter-spacing: -0.3px;
    color: #3b4450;
}

.last {
    font-weight: 700;
    letter-spacing: -0.42px;
    color: #222;
}

.well {
    height: 23px;
    margin-bottom: 7px;
    padding-left: 8px;
    border: 1px dashed #d2d2d2;
    line-height: 21px;
}

.well.full {
    height: 30px;
    margin-bottom: 6px;
    padding: 2px 2px 0 1px;
}

.pill {
    height: 19px;
    display: flex;
    align-items: center;
    padding: 0 3px;
    background: #fff;
    border: 1px solid #cfcfcf;
}

.pill svg {
    margin: 0 6px 0 auto;
}

.pill em {
    font-style: normal;
    color: #555;
}

.thumb {
    position: absolute;
    right: 0;
    top: 3px;
    width: 4px;
    height: 169px;
    border-radius: 2px;
    background: #5c5c5c;
}

.fields {
    flex: 1;
    min-width: 0;
}

.fields .head {
    padding: 0 8px 0 7px;
}

.fields .box {
    height: 20px;
    margin: 4px 4px 0;
    display: flex;
    align-items: center;
    gap: 6px;
    padding-left: 10px;
    background: #fff;
    border: 1px solid #d0d0d0;
    border-bottom-color: #888;
    border-radius: 3px;
    font-size: 11px;
    color: #666;
}

.table {
    height: 20px;
    margin-top: 7px;
    display: flex;
    align-items: center;
    padding-left: 12px;
}

.table svg+svg {
    margin: 2px 0 0 3px;
}

.fields ul {
    margin: 0;
    padding: 0;
    list-style: none;
}

.fields li {
    height: 20px;
    display: flex;
    align-items: center;
    padding-left: 37px;
    white-space: nowrap;
}

.fields li.more {
    padding-left: 24px;
}

.fields li svg {
    width: 12px;
    height: 11px;
    margin: 0 4px 0 5px;
}

.fields li .open {
    width: 8px;
    height: 8px;
    margin: 0 5px 0 0;
    transform: rotate(-90deg);
}

.fields li i {
    width: 10px;
    height: 10px;
    border: 1px solid #6b6b6b;
    border-radius: 2px;
}

.fields li .sel {
    border-color: #12855f;
    background: #12855f;
}

.sel::after {
    content: "";
    display: block;
    width: 5px;
    height: 3px;
    margin: 1.5px auto 0;
    border: solid #fff;
    border-width: 0 0 1px 1px;
    transform: rotate(-45deg);
}

/* status bar */
.status {
    height: 20px;
    flex: none;
    display: flex;
    align-items: center;
    justify-content: space-between;
    padding: 0 16px 0 3px;
    border-top: 1px solid #dcdcdc;
    border-bottom: 1px solid #444;
    letter-spacing: -0.3px;
    color: #55534a;
}

.zoom {
    display: flex;
    align-items: center;
    gap: 10px;
}

.zoom span {
    margin-right: 6px;
}
```
